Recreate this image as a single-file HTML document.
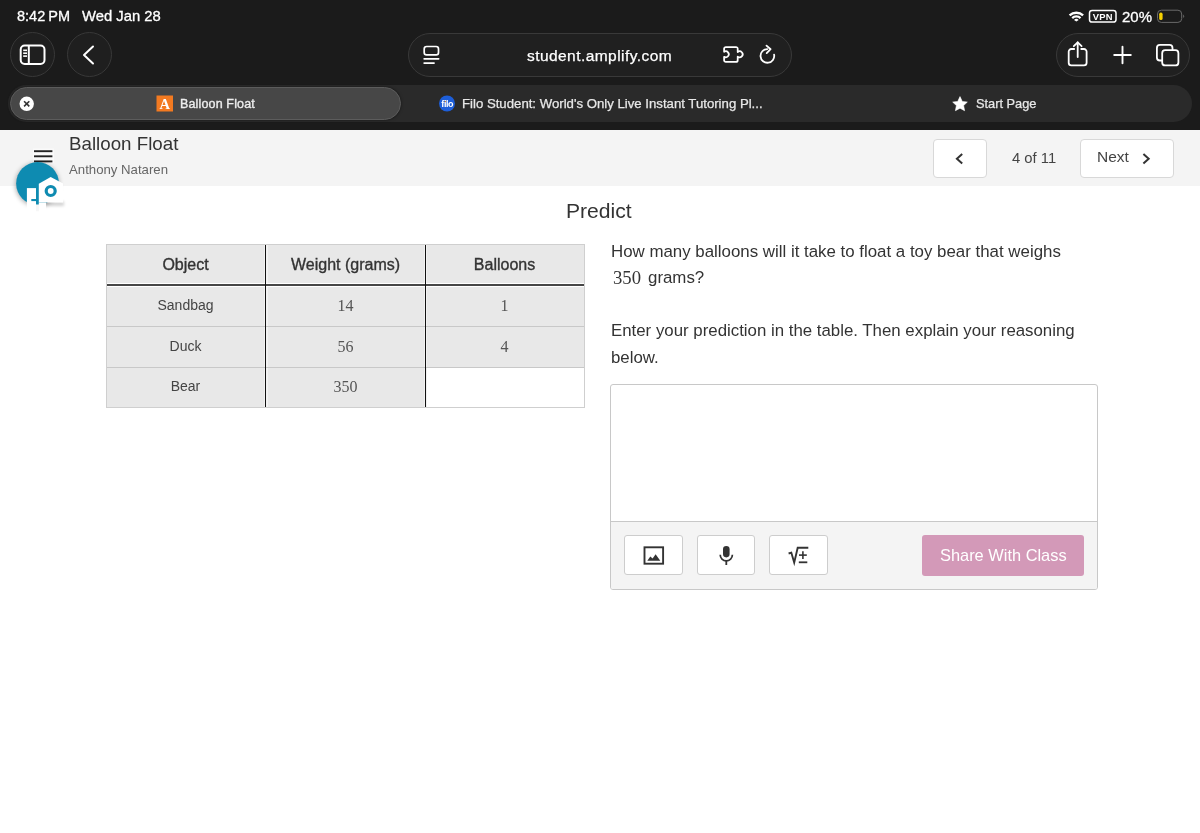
<!DOCTYPE html>
<html><head><meta charset="utf-8">
<style>
*{margin:0;padding:0;box-sizing:border-box}
html,body{width:1200px;height:833px;overflow:hidden;background:#fff;font-family:"Liberation Sans",sans-serif}
.t{will-change:transform}
.a{position:absolute}
.t{position:absolute;white-space:nowrap}
#chrome{position:absolute;left:0;top:0;width:1200px;height:130px;background:#1b1b1b}
.circ{position:absolute;width:45px;height:45px;border-radius:50%;background:#1f1f1f;border:1px solid #383838}
.pill{position:absolute;border-radius:22px;background:#202020;border:1px solid #393939}
svg{position:absolute;overflow:visible}
</style></head><body>
<div id="chrome">
  <!-- status bar -->
  <div class="t" style="left:16.5px;top:9px;font-size:14.5px;line-height:14.5px;color:#fff;-webkit-text-stroke:0.3px #fff">8:42<span style="letter-spacing:-1px"> </span>PM</div>
  <div class="t" style="left:82px;top:8.8px;font-size:14.8px;line-height:14.8px;color:#fff;-webkit-text-stroke:0.3px #fff">Wed Jan 28</div>

  <!-- toolbar circles -->
  <div class="circ" style="left:10px;top:32px"></div>
  <div class="circ" style="left:67px;top:32px"></div>

  <!-- URL pill -->
  <div class="pill" style="left:408px;top:33px;width:384px;height:44px"></div>
  <div class="t" style="left:526.7px;top:47.5px;font-size:15.5px;line-height:15.5px;color:#fff;letter-spacing:0.44px;-webkit-text-stroke:0.25px #fff">student.amplify.com</div>

  <!-- right pill -->
  <div class="pill" style="left:1056px;top:33px;width:134px;height:44px"></div>

  <!-- status right -->
  <div class="t" style="left:1121.6px;top:8.9px;font-size:15px;line-height:15px;color:#fff;-webkit-text-stroke:0.3px #fff">20%</div>

  <!-- tab bar -->
  <div class="a" style="left:8px;top:85px;width:1184px;height:37px;border-radius:18.5px;background:#2a2a2a"></div>
  <div class="a" style="left:10px;top:87px;width:391px;height:33px;border-radius:16.5px;background:#474747;border:1px solid #5c5c5c;box-shadow:0 0 3px rgba(0,0,0,.5)"></div>
  <div class="t" style="left:180px;top:97.9px;font-size:12.5px;line-height:12.5px;color:#eee;letter-spacing:0.15px;-webkit-text-stroke:0.35px #eee">Balloon Float</div>
  <div class="t" style="left:462px;top:96.8px;font-size:13.2px;line-height:13.2px;color:#e8e8e8;-webkit-text-stroke:0.25px #e8e8e8">Filo Student: World's Only Live Instant Tutoring Pl...</div>
  <div class="t" style="left:975.8px;top:97.6px;font-size:12.8px;line-height:12.8px;color:#e8e8e8;-webkit-text-stroke:0.25px #e8e8e8">Start Page</div>
</div>

<!-- page header -->
<div class="a" style="left:0;top:130px;width:1200px;height:56px;background:#f4f4f4"></div>
<div class="t" style="left:68.6px;top:135px;font-size:18.74px;line-height:18.74px;color:#333">Balloon Float</div>
<div class="t" style="left:69px;top:162.6px;font-size:13.2px;line-height:13.2px;color:#666">Anthony Nataren</div>

<div class="a" style="left:933px;top:139px;width:54px;height:38.5px;background:#fff;border:1px solid #d8d8d8;border-radius:4px"></div>
<div class="t" style="left:1011.7px;top:151px;font-size:14.8px;line-height:14.8px;color:#444">4 of 11</div>
<div class="a" style="left:1080px;top:139px;width:94px;height:38.5px;background:#fff;border:1px solid #d8d8d8;border-radius:4px"></div>
<div class="t" style="left:1096.5px;top:148.6px;font-size:15.5px;line-height:15.5px;color:#444">Next</div>

<!-- Predict -->
<div class="t" style="left:566.2px;top:200.4px;font-size:21.1px;line-height:21.1px;color:#333">Predict</div>

<!-- table -->
<div class="a" style="left:106px;top:244px;width:479px;height:164px;background:#e8e8e8;border:1px solid #cfcfcf"></div>
<div class="a" style="left:426px;top:367.5px;width:158px;height:39.5px;background:#fff"></div>
<div class="a" style="left:264px;top:245px;width:3.5px;height:162px;background:#f2f2f2"></div>
<div class="a" style="left:423.5px;top:245px;width:3.5px;height:162px;background:#f2f2f2"></div>
<div class="a" style="left:107px;top:325.6px;width:477px;height:1.2px;background:#c8c8c8"></div>
<div class="a" style="left:107px;top:366.6px;width:477px;height:1.2px;background:#c8c8c8"></div>
<div class="a" style="left:107px;top:282.6px;width:477px;height:4.4px;background:#fff"></div>
<div class="a" style="left:107px;top:283.7px;width:477px;height:2px;background:#464646"></div>
<div class="a" style="left:264.8px;top:245px;width:1.4px;height:162px;background:#111"></div>
<div class="a" style="left:424.6px;top:245px;width:1.4px;height:162px;background:#111"></div>

<div class="t" style="left:106px;width:159px;text-align:center;top:257px;font-size:16px;line-height:16px;color:#333;-webkit-text-stroke:0.35px #333">Object</div>
<div class="t" style="left:266px;width:159px;text-align:center;top:257px;font-size:16px;line-height:16px;color:#333;-webkit-text-stroke:0.35px #333">Weight (grams)</div>
<div class="t" style="left:425px;width:159px;text-align:center;top:257px;font-size:16px;line-height:16px;color:#333;-webkit-text-stroke:0.35px #333">Balloons</div>

<div class="t" style="left:106px;width:159px;text-align:center;top:298px;font-size:14px;line-height:14px;color:#444">Sandbag</div>
<div class="t" style="left:106px;width:159px;text-align:center;top:339px;font-size:14px;line-height:14px;color:#444">Duck</div>
<div class="t" style="left:106px;width:159px;text-align:center;top:379px;font-size:14px;line-height:14px;color:#444">Bear</div>

<div class="t" style="left:266px;width:159px;text-align:center;top:298.4px;font-size:16px;line-height:16px;color:#555;font-family:'Liberation Serif',serif">14</div>
<div class="t" style="left:266px;width:159px;text-align:center;top:339.4px;font-size:16px;line-height:16px;color:#555;font-family:'Liberation Serif',serif">56</div>
<div class="t" style="left:266px;width:159px;text-align:center;top:379.4px;font-size:16px;line-height:16px;color:#555;font-family:'Liberation Serif',serif">350</div>
<div class="t" style="left:425px;width:159px;text-align:center;top:298.4px;font-size:16px;line-height:16px;color:#555;font-family:'Liberation Serif',serif">1</div>
<div class="t" style="left:425px;width:159px;text-align:center;top:339.4px;font-size:16px;line-height:16px;color:#555;font-family:'Liberation Serif',serif">4</div>

<!-- question -->
<div class="t" style="left:610.6px;top:243.9px;font-size:16.87px;line-height:16.87px;color:#333">How many balloons will it take to float a toy bear that weighs</div>
<div class="t" style="left:612.5px;top:269.4px;font-size:18.7px;line-height:18.7px;color:#333;font-family:'Liberation Serif',serif">350</div>
<div class="t" style="left:648px;top:270px;font-size:16.87px;line-height:16.87px;color:#333">grams?</div>
<div class="t" style="left:610.6px;top:323.3px;font-size:16.84px;line-height:16.84px;color:#333">Enter your prediction in the table. Then explain your reasoning</div>
<div class="t" style="left:610.6px;top:349.8px;font-size:16.84px;line-height:16.84px;color:#333">below.</div>

<!-- response box -->
<div class="a" style="left:610px;top:384px;width:488px;height:206px;border:1px solid #c8c8c8;border-radius:3px;background:#fff;overflow:hidden">
  <div class="a" style="left:0;top:136px;width:486px;height:69px;background:#f4f4f4;border-top:1px solid #c8c8c8"></div>
</div>
<div class="a" style="left:624.4px;top:535.4px;width:58.6px;height:40px;background:#fff;border:1px solid #cdcdcd;border-radius:3px"></div>
<div class="a" style="left:696.6px;top:535.4px;width:58.6px;height:40px;background:#fff;border:1px solid #cdcdcd;border-radius:3px"></div>
<div class="a" style="left:769.2px;top:535.4px;width:58.6px;height:40px;background:#fff;border:1px solid #cdcdcd;border-radius:3px"></div>
<div class="a" style="left:922px;top:535.2px;width:162px;height:40.5px;background:#d399b8;border-radius:3px"></div>
<div class="t" style="left:939.7px;top:547px;font-size:16.4px;line-height:16.4px;color:#fff">Share With Class</div>


<!-- icon overlay -->
<svg width="1200" height="833" viewBox="0 0 1200 833" style="left:0;top:0;position:absolute" fill="none">
  <!-- sidebar icon -->
  <rect x="20.7" y="45.5" width="23.8" height="18.5" rx="4" stroke="#fff" stroke-width="2"/>
  <line x1="28.8" y1="45.5" x2="28.8" y2="64" stroke="#fff" stroke-width="2"/>
  <rect x="23.2" y="49.5" width="3.8" height="1.6" fill="#fff"/>
  <rect x="23.2" y="52.4" width="3.8" height="1.6" fill="#fff"/>
  <rect x="23.2" y="55.3" width="3.8" height="1.6" fill="#fff"/>
  <!-- back chevron -->
  <polyline points="93,46.5 84,55 93,63.5" stroke="#fff" stroke-width="2" stroke-linecap="round" stroke-linejoin="round"/>
  <!-- reader icon -->
  <rect x="424.2" y="46.5" width="14.3" height="8.3" rx="2.4" stroke="#fff" stroke-width="1.7"/>
  <line x1="424.2" y1="58.8" x2="438.6" y2="58.8" stroke="#fff" stroke-width="1.8" stroke-linecap="round"/>
  <line x1="424.2" y1="63.1" x2="434" y2="63.1" stroke="#fff" stroke-width="1.8" stroke-linecap="round"/>
  <!-- puzzle -->
  <path d="M725.8,47 H736 a1.7,1.7 0 0 1 1.7,1.7 V52 A3,3 0 1 1 737.7,56.6 V60.2 a1.7,1.7 0 0 1 -1.7,1.7 H725.8 a1.7,1.7 0 0 1 -1.7,-1.7 V56.8 A3,3 0 1 0 724.1,51.8 V48.7 a1.7,1.7 0 0 1 1.7,-1.7 Z" stroke="#fff" stroke-width="1.75" stroke-linejoin="round"/>
  <!-- reload -->
  <path d="M767.3,49.05 A6.85,6.85 0 1 0 774.1,54.6" stroke="#fff" stroke-width="1.8" stroke-linecap="round"/>
  <polyline points="766.5,45.6 770.6,49.2 766.7,53.1" stroke="#fff" stroke-width="1.8" stroke-linecap="round" stroke-linejoin="round"/>
  <!-- share -->
  <path d="M1074.2,49 H1071.3 a2.6,2.6 0 0 0 -2.6,2.6 V62.8 a2.6,2.6 0 0 0 2.6,2.6 H1084 a2.6,2.6 0 0 0 2.6,-2.6 V51.6 a2.6,2.6 0 0 0 -2.6,-2.6 H1081.2" stroke="#fff" stroke-width="1.8" stroke-linecap="round"/>
  <line x1="1077.7" y1="42.5" x2="1077.7" y2="57" stroke="#fff" stroke-width="1.8" stroke-linecap="round"/>
  <polyline points="1073.8,46.2 1077.7,42.3 1081.6,46.2" stroke="#fff" stroke-width="1.8" stroke-linecap="round" stroke-linejoin="round"/>
  <!-- plus -->
  <line x1="1114.2" y1="55" x2="1130.8" y2="55" stroke="#fff" stroke-width="1.9" stroke-linecap="round"/>
  <line x1="1122.5" y1="46.7" x2="1122.5" y2="63.3" stroke="#fff" stroke-width="1.9" stroke-linecap="round"/>
  <!-- tabs -->
  <rect x="1156.9" y="44.9" width="15.6" height="15.6" rx="3" stroke="#fff" stroke-width="1.8"/>
  <rect x="1162.2" y="50.2" width="16.2" height="15.2" rx="3" fill="#202020" stroke="#fff" stroke-width="1.8"/>
  <!-- wifi -->
  <path d="M1068.8,14.6 A11,11 0 0 1 1083.9,14.6 L1082.3,16.3 A8.7,8.7 0 0 0 1070.4,16.3 Z" fill="#fff"/>
  <path d="M1071.4,17.3 A7,7 0 0 1 1081.3,17.3 L1079.7,19 A4.7,4.7 0 0 0 1073,19 Z" fill="#fff"/>
  <path d="M1074,20 A3.3,3.3 0 0 1 1078.7,20 L1076.35,21.5 Z" fill="#fff"/>
  <!-- VPN -->
  <rect x="1089.5" y="10.4" width="26.5" height="11.6" rx="2.6" stroke="#fff" stroke-width="1.5"/>
  <text x="1102.75" y="19.7" fill="#fff" font-family="Liberation Sans" font-weight="700" font-size="9.4" text-anchor="middle" letter-spacing="0.3">VPN</text>
  <!-- battery -->
  <rect x="1157.5" y="10.2" width="24.2" height="12.2" rx="3.8" stroke="#6a6a6a" stroke-width="1"/>
  <rect x="1159.2" y="12.6" width="3.4" height="7.4" rx="1.6" fill="#f5d000"/>
  <path d="M1183.2,14.5 a2.2,2.2 0 0 1 0,3.6 Z" fill="#6a6a6a"/>
  <!-- close circle -->
  <circle cx="26.7" cy="103.8" r="7.2" fill="#fff"/>
  <line x1="24.1" y1="101.2" x2="29.3" y2="106.4" stroke="#333" stroke-width="1.6"/>
  <line x1="29.3" y1="101.2" x2="24.1" y2="106.4" stroke="#333" stroke-width="1.6"/>
  <!-- amplify A -->
  <rect x="156.5" y="95.5" width="16.5" height="16" fill="#f37a21"/>
  <text x="164.75" y="109.2" fill="#fff" font-family="Liberation Serif" font-weight="700" font-size="14.5" text-anchor="middle">A</text>
  <!-- filo -->
  <circle cx="447" cy="103.5" r="8" fill="#1d5ed9"/>
  <text x="447.2" y="107" fill="#fff" font-family="Liberation Sans" font-weight="700" font-size="9" text-anchor="middle" letter-spacing="-0.45">filo</text><circle cx="445.4" cy="101.6" r="0.7" fill="#f08a1c"/>
  <!-- star -->
  <path d="M960,96.6 L962.3,101.5 L967.3,102.1 L963.6,105.6 L964.6,110.7 L960,108.2 L955.4,110.7 L956.4,105.6 L952.7,102.1 L957.7,101.5 Z" fill="#fff" stroke="#fff" stroke-width="0.6" stroke-linejoin="round"/>

  <!-- pager chevrons -->
  <polyline points="962.2,153.9 956.9,158.7 962.2,163.5" stroke="#333" stroke-width="2" stroke-linejoin="miter"/>
  <polyline points="1143.4,153.9 1148.7,158.7 1143.4,163.5" stroke="#333" stroke-width="2" stroke-linejoin="miter"/>

  <!-- image icon -->
  <rect x="644.5" y="547.3" width="18.6" height="16.4" stroke="#333" stroke-width="1.9"/>
  <path d="M647.3,560.7 L650.3,556.6 L652.6,558.4 L655.6,554.2 L660.3,560.7 Z" fill="#333"/>
  <!-- mic -->
  <rect x="723" y="546" width="6.6" height="11.4" rx="3.3" fill="#333"/>
  <path d="M720.2,554.8 a6.1,6.1 0 0 0 12.2,0" stroke="#333" stroke-width="1.7"/>
  <line x1="726.3" y1="560.8" x2="726.3" y2="565" stroke="#333" stroke-width="1.8"/>
  <!-- sqrt +- -->
  <path d="M788.6,553.5 L791.3,552.6 L794.2,562.6 L797.7,547.8 H808.3" stroke="#333" stroke-width="1.9" stroke-linejoin="miter"/>
  <line x1="799" y1="555.1" x2="806.8" y2="555.1" stroke="#333" stroke-width="1.6"/>
  <line x1="802.9" y1="551.3" x2="802.9" y2="559" stroke="#333" stroke-width="1.6"/>
  <line x1="798.8" y1="562.3" x2="807.3" y2="562.3" stroke="#333" stroke-width="1.8"/>

  <!-- hamburger -->
  <rect x="33" y="148.5" width="21" height="14.5" fill="#fafafa"/>
  <line x1="34" y1="151.2" x2="52.4" y2="151.2" stroke="#222" stroke-width="1.9"/>
  <line x1="34" y1="156.3" x2="52.4" y2="156.3" stroke="#222" stroke-width="1.9"/>
  <line x1="34" y1="161.4" x2="52.4" y2="161.4" stroke="#222" stroke-width="1.9"/>
  <defs>
    <filter id="sh" x="-50%" y="-50%" width="200%" height="200%"><feGaussianBlur stdDeviation="2.6"/></filter>
    <filter id="sh2" x="-50%" y="-50%" width="200%" height="200%"><feGaussianBlur stdDeviation="1.6"/></filter>
  </defs>
  <circle cx="37.3" cy="184.6" r="21.6" fill="#000" opacity="0.35" filter="url(#sh)"/>
  <circle cx="37.55" cy="183.5" r="21.4" fill="#0e8bb1"/>
  <rect x="44" y="201.5" width="20" height="4.5" fill="#000" opacity="0.17" filter="url(#sh2)"/>
  <rect x="36" y="204.5" width="3" height="6.7" fill="#f6f6f6"/>
  <polygon points="38.8,183.8 50.7,177 63,183.5 63,202.5 38.8,202.5" fill="#fff"/>
  <circle cx="50.7" cy="191" r="4.5" stroke="#0e8bb1" stroke-width="3.2"/>
  <rect x="26.9" y="188.1" width="9.1" height="23.1" fill="#fff"/>
  <rect x="31.3" y="199" width="4.7" height="2.1" fill="#0e8bb1"/>
  <rect x="38.8" y="202.5" width="7.2" height="8.7" fill="#fff"/>
</svg>
</body></html>
